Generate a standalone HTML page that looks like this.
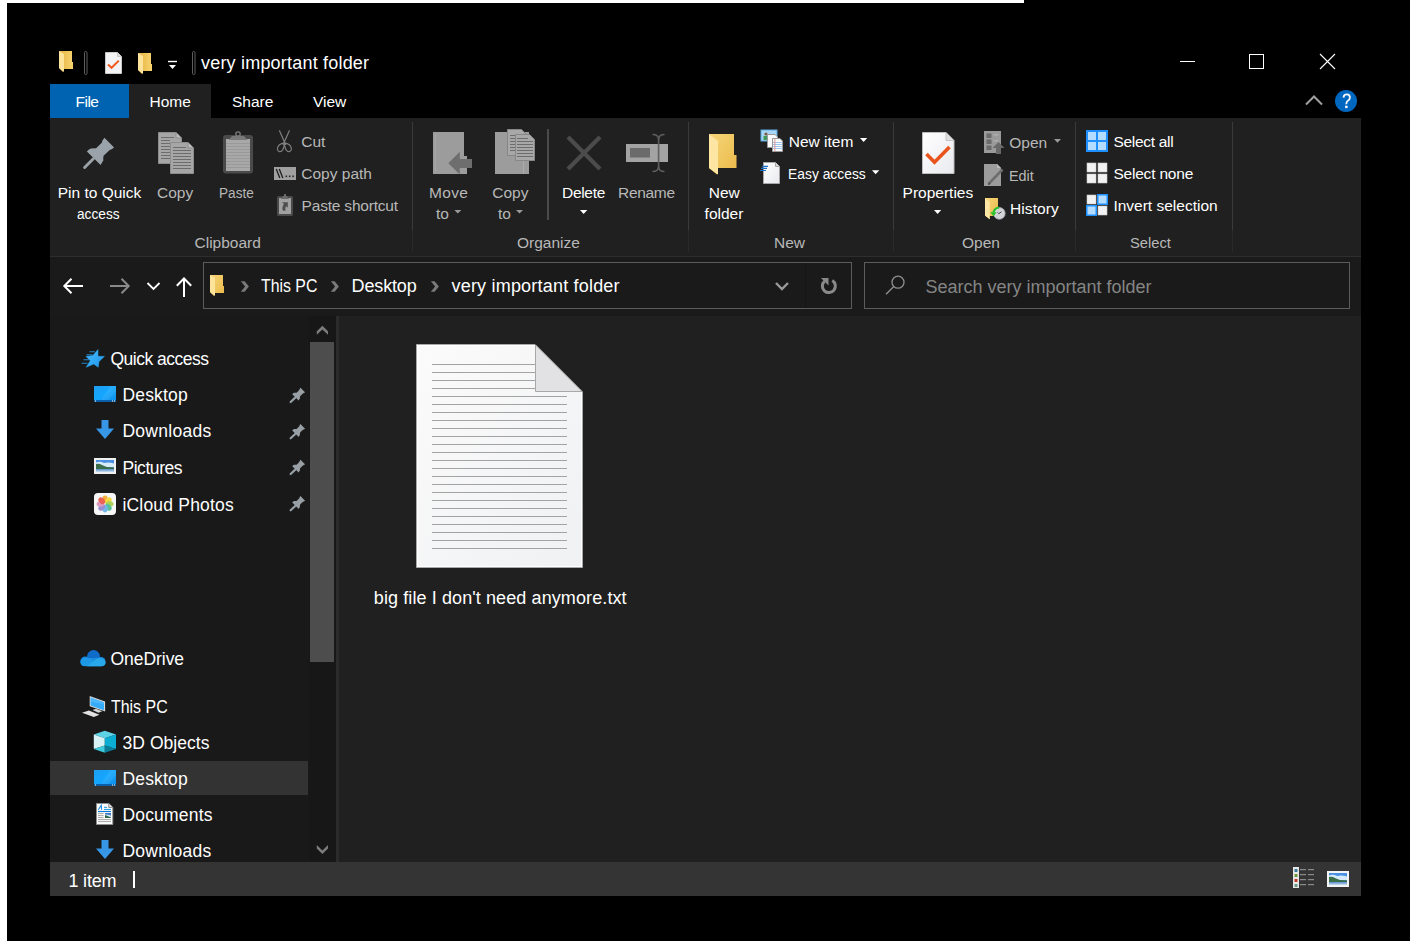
<!DOCTYPE html>
<html><head><meta charset="utf-8">
<style>
html,body{margin:0;padding:0;}
body{width:1410px;height:941px;background:#000;position:relative;overflow:hidden;font-family:"Liberation Sans",sans-serif;color:#fff;}
.a{position:absolute;}
.t{position:absolute;line-height:0;white-space:nowrap;}
.r{font-size:15.5px;}
.g{color:#b8b8b8;}
.n{font-size:17.5px;}
svg{position:absolute;overflow:visible;}
</style></head><body>
<!-- white borders -->
<div class="a" style="left:0;top:0;width:1024px;height:3px;background:#fff"></div>
<div class="a" style="left:0;top:0;width:7px;height:941px;background:#fff"></div>

<!-- title bar -->
<div class="t" style="left:201px;top:62.5px;font-size:18px;letter-spacing:0.2px">very important folder</div>

<!-- tabs -->
<div class="a" style="left:50px;top:84px;width:79px;height:34px;background:#0063b1"></div>
<div class="a" style="left:129px;top:84px;width:82px;height:34px;background:#202020"></div>
<div class="t r" style="left:75.5px;top:102px;letter-spacing:-0.5px">File</div>
<div class="t r" style="left:149.5px;top:102px">Home</div>
<div class="t r" style="left:232px;top:102px">Share</div>
<div class="t r" style="left:313px;top:102px">View</div>

<!-- ribbon body -->
<div class="a" style="left:50px;top:118px;width:1311px;height:138px;background:#202020"></div>
<div class="a" style="left:50px;top:256px;width:1311px;height:1px;background:#2e2e2e"></div>

<!-- address area -->
<div class="a" style="left:50px;top:257px;width:1311px;height:59px;background:#1a1a1a"></div>
<!-- nav pane -->
<div class="a" style="left:50px;top:316px;width:259px;height:546px;background:#191919"></div>
<div class="a" style="left:309px;top:316px;width:27px;height:546px;background:#171717"></div>
<div class="a" style="left:336px;top:316px;width:3px;height:546px;background:#2b2b2b"></div>
<div class="a" style="left:50px;top:761px;width:258px;height:34px;background:#333"></div>
<div class="a" style="left:310px;top:342px;width:24px;height:320px;background:#4d4d4d"></div>
<!-- content -->
<div class="a" style="left:339px;top:316px;width:1022px;height:546px;background:#202020"></div>
<!-- status -->
<div class="a" style="left:50px;top:862px;width:1311px;height:34px;background:#343434"></div>

<!-- ICONS: title bar -->
<svg style="left:0;top:0" width="1410" height="120">
 <defs>
  <linearGradient id="fold" x1="0" y1="0" x2="1" y2="0"><stop offset="0" stop-color="#e6b23f"/><stop offset="1" stop-color="#f7d470"/></linearGradient>
 </defs>
 <!-- folder 1 -->
 <g transform="translate(59,51)">
  <path d="M0 0H13V11H14V18H4V21L0 17Z" fill="url(#fold)"/>
  <path d="M0 0L5 3V21L0 17Z" fill="#fde49a"/>
 </g>
 <!-- separator -->
 <rect x="84.5" y="51.5" width="2.5" height="23" rx="1.2" fill="none" stroke="#5e5e5e" stroke-width="1"/>
 <!-- properties doc small -->
 <g transform="translate(105,52)">
  <path d="M0.5 0.5H12.5L16.5 4.5V21.5H0.5Z" fill="#f3f3f5" stroke="#c8c8c8" stroke-width="1"/>
  <path d="M12.5 0.5V4.5H16.5" fill="#dcdcdc" stroke="#c8c8c8" stroke-width="1"/>
  <path d="M3 12.5L6.6 15.8L13.8 8.6" fill="none" stroke="#f05a1e" stroke-width="2"/>
 </g>
 <!-- folder 2 -->
 <g transform="translate(138,53)">
  <path d="M0 0H13V11H14V18H4V21L0 17Z" fill="url(#fold)"/>
  <path d="M0 0L5 3V21L0 17Z" fill="#fde49a"/>
 </g>
 <!-- dropdown -->
 <rect x="168" y="60.8" width="9" height="1.4" fill="#fff"/>
 <path d="M169 65H176L172.5 69Z" fill="#fff"/>
 <rect x="192.5" y="51.5" width="2.5" height="23" rx="1.2" fill="none" stroke="#5e5e5e" stroke-width="1"/>
 <!-- window controls -->
 <rect x="1180" y="61" width="15" height="1" fill="#fff"/>
 <rect x="1249.5" y="54.5" width="14" height="14" fill="none" stroke="#fff" stroke-width="1"/>
 <path d="M1320 54L1335 69M1335 54L1320 69" stroke="#fff" stroke-width="1.1"/>
 <!-- ribbon minimize chevron -->
 <path d="M1306 104.5L1314 96.5L1322 104.5" fill="none" stroke="#a0a0a0" stroke-width="2"/>
 <!-- help -->
 <circle cx="1346" cy="101" r="11" fill="#0067c0"/>
</svg>
<svg style="left:0;top:0" width="1410" height="120"><path d="M1343.5 97.6Q1343.7 94.4 1346.8 94.4Q1349.9 94.4 1349.9 97.4Q1349.9 99.4 1347.8 100.7Q1346.3 101.7 1346.3 104.2" fill="none" stroke="#f4f8fc" stroke-width="1.8"/><rect x="1345.1" y="105.7" width="2.5" height="2.4" fill="#f4f8fc"/></svg>
<!-- ICONS: ribbon -->
<svg style="left:0;top:0" width="1410" height="260">
 <defs>
  <linearGradient id="yfold" x1="0" y1="0" x2="1" y2="1"><stop offset="0" stop-color="#f7d679"/><stop offset="1" stop-color="#e9b949"/></linearGradient>
  <linearGradient id="wpage" x1="0" y1="0" x2="1" y2="1"><stop offset="0" stop-color="#ffffff"/><stop offset="1" stop-color="#e9eaee"/></linearGradient>
 </defs>
 <!-- group separators -->
 <g fill="#3a3a3a">
  <rect x="412" y="122" width="1" height="108"/>
  <rect x="688" y="122" width="1" height="108"/>
  <rect x="893" y="122" width="1" height="108"/>
  <rect x="1075" y="122" width="1" height="108"/>
  <rect x="1232" y="122" width="1" height="108"/>
 </g>
 <g fill="#2a2a2a">
  <rect x="412" y="230" width="1" height="22"/>
  <rect x="688" y="230" width="1" height="22"/>
  <rect x="893" y="230" width="1" height="22"/>
  <rect x="1075" y="230" width="1" height="22"/>
  <rect x="1232" y="230" width="1" height="22"/>
 </g>
 <rect x="547" y="129" width="2" height="91" fill="#4a4a4a"/>
 <!-- pin -->
 <g transform="translate(80,134)" fill="#9aa3a9">
  <path d="M24.4 3.8L34.1 13.5Q31.5 15.8 29.7 16.1L23.6 21.8Q23 24 23.4 26.2L20.6 31.1L6.9 17.4Q9 15.2 10.9 14.5L16.1 14.3L22 8.5Q21.8 7 24.4 3.8Z"/>
  <path d="M13.3 24.8L4.6 33.5" stroke="#9aa3a9" stroke-width="2.9" stroke-linecap="round"/>
 </g>
 <!-- copy -->
 <g stroke="#8c8c8c" stroke-width="1">
  <path d="M158.5 132.5H176L181.5 138V163.5H158.5Z" fill="#a6a6a6"/>
  <path d="M176 132.5V138H181.5" fill="#bdbdbd"/>
  <path d="M170.5 142.5H188L193.5 148V173.5H170.5Z" fill="#a6a6a6"/>
  <path d="M188 142.5V148H193.5" fill="#bdbdbd"/>
 </g>
 <g fill="#6c6c6c">
  <rect x="161" y="137" width="13" height="1"/>
  <rect x="161" y="140" width="9" height="1"/><rect x="161" y="143" width="9" height="1"/><rect x="161" y="146" width="9" height="1"/><rect x="161" y="149" width="9" height="1"/><rect x="161" y="152" width="9" height="1"/><rect x="161" y="155" width="9" height="1"/><rect x="161" y="158" width="9" height="1"/>
  <rect x="173" y="147" width="13" height="1"/>
  <rect x="173" y="150" width="18" height="1"/><rect x="173" y="153" width="18" height="1"/><rect x="173" y="156" width="18" height="1"/><rect x="173" y="159" width="18" height="1"/><rect x="173" y="162" width="18" height="1"/><rect x="173" y="165" width="18" height="1"/><rect x="173" y="168" width="18" height="1"/>
 </g>
 <!-- paste -->
 <rect x="223" y="135" width="30" height="38.5" rx="3" fill="#4a4a4a"/>
 <rect x="226" y="139" width="24" height="32" fill="#a8a8a8"/>
 <g fill="#999"><rect x="226" y="143" width="24" height="1"/><rect x="226" y="146" width="24" height="1"/><rect x="226" y="149" width="24" height="1"/><rect x="226" y="152" width="24" height="1"/><rect x="226" y="155" width="24" height="1"/><rect x="226" y="158" width="24" height="1"/><rect x="226" y="161" width="24" height="1"/><rect x="226" y="164" width="24" height="1"/><rect x="226" y="167" width="24" height="1"/></g>
 <path d="M228.5 140L232 136H244L247.5 140Z" fill="#7a7a7a"/>
 <circle cx="238" cy="134" r="2.2" fill="none" stroke="#7a7a7a" stroke-width="1.3"/>
 <!-- scissors -->
 <g fill="none" stroke="#7e7e7e" stroke-width="1.25" stroke-linecap="round">
  <path d="M279.5 130.8L285.6 144.5M289.3 130.8L283.2 144.5"/>
  <path d="M284 143.2C281 143.4 277.2 145.5 277.4 149C277.6 152 281 152.6 282.6 150C283.8 148 284.2 145.6 285.2 143.2"/>
  <path d="M284.8 143.2C287.8 143.4 291.6 145.5 291.4 149C291.2 152 287.8 152.6 286.2 150C285 148 284.6 145.6 283.6 143.2"/>
 </g>
 <!-- copy path -->
 <rect x="274" y="167" width="22" height="13" fill="#a0a0a0"/>
 <path d="M276.3 169L279.8 178M279.3 169L282.8 178" stroke="#1e1e1e" stroke-width="1.3"/>
 <g fill="#2a2a2a"><rect x="285.5" y="175.5" width="1.6" height="1.6"/><rect x="288.9" y="175.5" width="1.6" height="1.6"/><rect x="292.3" y="175.5" width="1.6" height="1.6"/></g>
 <!-- paste shortcut -->
 <rect x="277" y="196" width="16" height="20" rx="1.5" fill="#4a4a4a"/>
 <rect x="279" y="198" width="12" height="16" fill="#a0a0a0"/>
 <path d="M281 199L283 196H287L289 199Z" fill="#6a6a6a"/>
 <rect x="284" y="194" width="2" height="2" fill="#6a6a6a"/>
 <path d="M282.1 202.3H287.8V207.7L286.3 206.2Q284.6 207.8 285.6 210.3L283.4 211Q281 208.6 283.9 204.1Z" fill="#4e4e4e"/>
 <!-- move to -->
 <path d="M433 132H464V156H467V174H433Z" fill="#9c9c9c"/>
 <rect x="435" y="134" width="1" height="38" fill="#b0b0b0" opacity="0.5"/>
 <path d="M448.3 163.3L459.8 151.8V159H472V168H459.8V174.6Z" fill="#6e6e6e"/>
 <!-- copy to -->
 <path d="M495 132H529V174H495Z" fill="#9c9c9c"/>
 <rect x="523" y="160" width="1" height="14" fill="#b8b8b8" opacity="0.6"/>
 <g stroke="#868686" stroke-width="1">
  <path d="M507.5 129.5H521.5L527.5 135.5V155.5H507.5Z" fill="#a8a8a8"/>
  <path d="M515.5 134.5H529.5L534.5 139.5V160.5H515.5Z" fill="#a8a8a8"/>
 </g>
 <g fill="#6c6c6c">
  <rect x="510" y="135" width="5" height="1"/><rect x="510" y="138" width="5" height="1"/><rect x="510" y="141" width="5" height="1"/><rect x="510" y="144" width="5" height="1"/><rect x="510" y="147" width="5" height="1"/><rect x="510" y="150" width="5" height="1"/>
  <rect x="517" y="138" width="11" height="1"/><rect x="517" y="141" width="16" height="1"/><rect x="517" y="144" width="16" height="1"/><rect x="517" y="147" width="16" height="1"/><rect x="517" y="150" width="16" height="1"/><rect x="517" y="153" width="16" height="1"/><rect x="517" y="156" width="16" height="1"/>
 </g>
 <!-- delete X -->
 <path d="M568 137L600 169M600 137L568 169" stroke="#4b4b4b" stroke-width="4.2"/>
 <!-- rename -->
 <rect x="626" y="144" width="42" height="18" fill="#a3a3a3"/>
 <rect x="630" y="148" width="20" height="9.5" fill="#6b6b6b"/>
 <rect x="652" y="144" width="2" height="18" fill="#202020" opacity="0"/>
 <g fill="none" stroke="#5e5e5e" stroke-width="1.6">
  <path d="M658.6 138V168"/>
  <path d="M652.5 134.5Q658.6 134.5 658.6 139.5Q658.6 134.5 664.5 134.5"/>
  <path d="M652.5 171.5Q658.6 171.5 658.6 166.5Q658.6 171.5 664.5 171.5"/>
 </g>
 <!-- new folder -->
 <path d="M709 134H734V155H736.5V168H717V174.5L709 168Z" fill="url(#yfold)"/>
 <path d="M709 134L718 141V174.5L709 168Z" fill="#fde6a3"/>
 <!-- new item -->
 <rect x="761" y="130" width="16" height="11" fill="#a8d6f4" stroke="#5aa9e0" stroke-width="1"/>
 <circle cx="766" cy="134" r="1.6" fill="#7a5a40"/>
 <rect x="763.5" y="136" width="5" height="4" fill="#3f9a5a"/>
 <path d="M767.5 134.5H775L777.5 137V147.5H767.5Z" fill="#fafafa" stroke="#9a9a9a" stroke-width="1"/>
 <path d="M772.5 138.5H780L782.5 141V151.5H772.5Z" fill="#fafafa" stroke="#9a9a9a" stroke-width="1"/>
 <g fill="#9cc6ec"><rect x="773" y="142" width="9" height="1"/><rect x="773" y="144" width="9" height="1"/><rect x="773" y="146" width="9" height="1"/><rect x="773" y="148" width="9" height="1"/></g>
 <rect x="774.5" y="139" width="0.8" height="12" fill="#e88080"/>
 <!-- easy access -->
 <path d="M763.5 162.5H775.5L779.5 166.5V183.5H763.5Z" fill="url(#wpage)" stroke="#a8a8a8" stroke-width="1"/>
 <path d="M775.5 162.5V166.5H779.5" fill="#dcdcdc" stroke="#a8a8a8" stroke-width="1"/>
 <g stroke="#1a6fc9" stroke-width="1.2"><path d="M762 166.3H768M761 168.4H767M760 170.5H766"/></g>
 <!-- properties big -->
 <path d="M922.5 132.5H946L954 140.5V173.5H922.5Z" fill="url(#wpage)" stroke="#bdbdbd" stroke-width="1"/>
 <path d="M946 132.5V140.5H954" fill="#dedede" stroke="#c4c4c4" stroke-width="1"/>
 <path d="M926.5 154L934.5 162.2L949.5 147" fill="none" stroke="#e9541c" stroke-width="3.6"/>
 <!-- open -->
 <rect x="984" y="131" width="17" height="22" fill="#9a9a9a"/>
 <g fill="#6a6a6a"><rect x="986.5" y="133.5" width="5" height="4.5"/><rect x="986.5" y="139.5" width="5" height="4.5"/><rect x="986.5" y="145.5" width="5" height="4.5"/></g>
 <g fill="#bdbdbd"><rect x="993.5" y="134.5" width="5" height="0.8"/><rect x="993.5" y="140.5" width="5" height="0.8"/></g>
 <path d="M998.5 142L1004.5 148H1001V154H996V148H992.5Z" fill="#6a6a6a"/>
 <!-- edit -->
 <path d="M984 164H997L1001 168V186H984Z" fill="#9c9c9c"/>
 <path d="M997 164V168H1001Z" fill="#bababa"/>
 <path d="M988.5 184L1002.5 169.5" stroke="#6e6e6e" stroke-width="2.6"/>
 <path d="M987.8 185L988.8 182.5L990.5 184Z" fill="#444"/>
 <!-- history -->
 <path d="M985 198H998V216H989.7V219.2L985 215.5Z" fill="url(#yfold)"/>
 <path d="M985 198L989.7 201.5V219.2L985 215.5Z" fill="#fde6a3"/>
 <circle cx="999.3" cy="213.4" r="5.8" fill="#d2d4d8" stroke="#a9adb2" stroke-width="0.9"/>
 <path d="M997.5 212.4L998.8 213.6L1001.5 211.8" fill="none" stroke="#333" stroke-width="0.9"/>
 <path d="M999.3 207.5Q994.5 207.8 993.4 212.5" fill="none" stroke="#27c22a" stroke-width="2.2"/>
 <path d="M990.2 212.2L996.6 212.2L993.6 216.3Z" fill="#27c22a"/>
 <!-- select all -->
 <rect x="1086" y="130" width="22" height="22" fill="#1e8fff"/>
 <g fill="#b3dcff"><rect x="1088" y="132" width="8" height="8"/><rect x="1098" y="132" width="8" height="8"/><rect x="1088" y="142" width="8" height="8"/><rect x="1098" y="142" width="8" height="8"/></g>
 <!-- select none -->
 <g fill="#f2f2f2" stroke="#c8c8c8" stroke-width="0.6"><rect x="1087" y="163" width="9" height="9"/><rect x="1098" y="163" width="9" height="9"/><rect x="1087" y="174" width="9" height="9"/><rect x="1098" y="174" width="9" height="9"/></g>
 <!-- invert -->
 <g fill="#f2f2f2" stroke="#c8c8c8" stroke-width="0.6"><rect x="1087" y="195" width="9" height="9"/><rect x="1098" y="206" width="9" height="9"/></g>
 <rect x="1097" y="194" width="11" height="11" fill="#1e8fff"/><rect x="1098.5" y="195.5" width="8" height="8" fill="#b3dcff"/>
 <rect x="1086" y="205" width="11" height="11" fill="#1e8fff"/><rect x="1087.5" y="206.5" width="8" height="8" fill="#b3dcff"/>
 <!-- dropdown triangles -->
 <g fill="#9a9a9a">
  <path d="M454.3 210H461.3L457.8 213.5Z"/>
  <path d="M516 210H523L519.5 213.5Z"/>
  <path d="M1054 139H1061L1057.5 142.8Z"/>
 </g>
 <g fill="#fff">
  <path d="M580 210H587.3L583.6 214Z"/>
  <path d="M860 138H867.2L863.6 142Z"/>
  <path d="M872 170.3H879.3L875.6 174.3Z"/>
  <path d="M934 210H941.2L937.6 214Z"/>
 </g>
</svg>
<!-- ICONS: address + nav + content + status -->
<svg style="left:0;top:0" width="1410" height="941">
 <defs>
  <linearGradient id="yfold2" x1="0" y1="0" x2="1" y2="1"><stop offset="0" stop-color="#f7d679"/><stop offset="1" stop-color="#e9b949"/></linearGradient>
  <linearGradient id="desk" x1="0" y1="0" x2="1" y2="1"><stop offset="0" stop-color="#1e9ef0"/><stop offset="0.5" stop-color="#14a6ff"/><stop offset="1" stop-color="#0d8de6"/></linearGradient>
  <linearGradient id="star" x1="0" y1="0" x2="1" y2="1"><stop offset="0" stop-color="#4bbcff"/><stop offset="1" stop-color="#1a94ea"/></linearGradient>
  <linearGradient id="sky" x1="0" y1="0" x2="0" y2="1"><stop offset="0" stop-color="#3a8ee8"/><stop offset="0.45" stop-color="#d8ecf8"/><stop offset="0.55" stop-color="#3f7a4c"/><stop offset="0.7" stop-color="#3f7a4c"/><stop offset="0.75" stop-color="#5a8fc8"/><stop offset="1" stop-color="#a8c8e8"/></linearGradient>
  <linearGradient id="paper" x1="0" y1="0" x2="1" y2="1"><stop offset="0" stop-color="#fbfbfb"/><stop offset="1" stop-color="#f0f1f3"/></linearGradient>
  <linearGradient id="cloud" x1="0" y1="0" x2="0" y2="1"><stop offset="0" stop-color="#0a66c2"/><stop offset="1" stop-color="#28a8ea"/></linearGradient>
 </defs>
 <!-- nav arrows -->
 <g fill="none" stroke-width="2">
  <path d="M83 286H65M71.5 278.8L64.3 286L71.5 293.2" stroke="#fff"/>
  <path d="M110 286H128M121.5 278.8L128.7 286L121.5 293.2" stroke="#8a8a8a"/>
  <path d="M147.5 283L153.5 289L159.5 283" stroke="#fff" stroke-width="1.8"/>
  <path d="M184 297V279M176.8 285.7L184 278.5L191.2 285.7" stroke="#fff"/>
 </g>
 <!-- address box -->
 <rect x="203.5" y="262.5" width="648" height="46" fill="#1a1a1a" stroke="#5c5c5c" stroke-width="1"/>
 <rect x="805" y="263" width="1" height="45" fill="#151515"/>
 <rect x="864.5" y="262.5" width="485" height="46" fill="#1a1a1a" stroke="#5c5c5c" stroke-width="1"/>
 <!-- address folder -->
 <g transform="translate(210,275)">
  <path d="M0 0H13V11H14V18H4V21L0 17Z" fill="url(#yfold2)"/>
  <path d="M0 0L5 3V21L0 17Z" fill="#fde49a"/>
 </g>
 <!-- breadcrumb chevrons -->
 <g fill="#7a7a7a">
  <path d="M240.8 281.2H244.6L248.9 286.5L244.6 291.8H240.8L245.1 286.5Z"/>
  <path d="M330.8 281.2H334.6L338.9 286.5L334.6 291.8H330.8L335.1 286.5Z"/>
  <path d="M430.8 281.2H434.6L438.9 286.5L434.6 291.8H430.8L435.1 286.5Z"/>
 </g>
 <path d="M776 283L782 289L788 283" fill="none" stroke="#9a9a9a" stroke-width="2.4"/>
 <!-- refresh -->
 <path d="M832.3 280.6A6.5 6.5 0 1 1 824.6 281.2" fill="none" stroke="#8a8a8a" stroke-width="3"/>
 <path d="M821 278H828.5V285.5Z" fill="#8a8a8a"/>
 <!-- search icon -->
 <circle cx="898" cy="282.2" r="6" fill="none" stroke="#8e8e8e" stroke-width="1.3"/>
 <path d="M893.8 286.5L886 294.3" stroke="#8e8e8e" stroke-width="1.4"/>
 <!-- scrollbar arrows -->
 <path d="M316.8 331.3L322.4 325.8L328 331.3V334.8L322.4 329.4L316.8 334.8Z" fill="#7c7c7c"/>
 <path d="M316.8 848.5L322.4 854L328 848.5V845L322.4 850.4L316.8 845Z" fill="#7c7c7c"/>
 <!-- star -->
 <g stroke="#2aa0f0" stroke-width="1.1" opacity="0.8">
  <path d="M89.5 351.8H95M86.5 354.8H92.5M83.5 359.8H89.5M81.5 363.3H87.5"/>
 </g>
 <path d="M98.0 349.6L98.0 356.3L104.4 356.4L99.0 361.5L98.2 367.2L93.8 364.1L86.2 367.2L90.3 360.5L85.9 356.4L92.8 355.5Z" fill="url(#star)" stroke="#2ba8f8" stroke-width="0.5" stroke-linejoin="round"/>
 <!-- desktop icons -->
 <g>
  <rect x="94" y="386" width="22" height="16" fill="url(#desk)"/>
  <path d="M100 402L110 386H116V392L106 402Z" fill="#fff" opacity="0.08"/>
  <rect x="94" y="400" width="22" height="2" fill="#0a5fa8"/>
  <rect x="95" y="400.5" width="1" height="1" fill="#fff"/><rect x="112" y="400.5" width="1" height="1" fill="#fff"/><rect x="114" y="400.5" width="1" height="1" fill="#fff"/>
 </g>
 <g>
  <rect x="94" y="770" width="22" height="16" fill="url(#desk)"/>
  <path d="M100 786L110 770H116V776L106 786Z" fill="#fff" opacity="0.08"/>
  <rect x="94" y="784" width="22" height="2" fill="#0a5fa8"/>
  <rect x="95" y="784.5" width="1" height="1" fill="#fff"/><rect x="112" y="784.5" width="1" height="1" fill="#fff"/><rect x="114" y="784.5" width="1" height="1" fill="#fff"/>
 </g>
 <!-- downloads -->
 <path d="M101.5 420H108.5V428.5H114L105 439L96 428.5H101.5Z" fill="#3796e6"/>
 <path d="M101.5 840H108.5V848.5H114L105 859L96 848.5H101.5Z" fill="#3796e6"/>
 <!-- pictures -->
 <rect x="94" y="458" width="22" height="16" fill="#f0f0f0"/>
 <rect x="96" y="460" width="18" height="12" fill="#4a90e2"/>
 <path d="M96 462.5Q100 461 104 463Q109 462 114 463.5V467H96Z" fill="#d6ebf7"/>
 <path d="M96 464Q99 463 102 465Q106 467.5 114 467.5V469H96Z" fill="#3a6e4a"/>
 <path d="M96 469H114V472H96Z" fill="#6a9ad0"/>
 <path d="M96 470.5H114V472H96Z" fill="#b9d3ea"/>
 <!-- icloud photos -->
 <rect x="94" y="493" width="22" height="22" rx="4" fill="#f7f7f7"/>
 <g opacity="0.85" transform="translate(105,504)">
  <ellipse cx="0" cy="-4.6" rx="2.8" ry="3.8" fill="#f7a21b"/>
  <ellipse cx="0" cy="-4.6" rx="2.8" ry="3.8" fill="#f6d51f" transform="rotate(45)"/>
  <ellipse cx="0" cy="-4.6" rx="2.8" ry="3.8" fill="#9ccc3c" transform="rotate(90)"/>
  <ellipse cx="0" cy="-4.6" rx="2.8" ry="3.8" fill="#3cb88a" transform="rotate(135)"/>
  <ellipse cx="0" cy="-4.6" rx="2.8" ry="3.8" fill="#5aaee6" transform="rotate(180)"/>
  <ellipse cx="0" cy="-4.6" rx="2.8" ry="3.8" fill="#8a7ccc" transform="rotate(225)"/>
  <ellipse cx="0" cy="-4.6" rx="2.8" ry="3.8" fill="#d78ab8" transform="rotate(270)"/>
  <ellipse cx="0" cy="-4.6" rx="2.8" ry="3.8" fill="#ea4a3a" transform="rotate(315)"/>
 </g>
 <!-- pins -->
 <g fill="#98a0a6">
  <g transform="translate(289,386) scale(0.47)"><path d="M24.4 3.8L34.1 13.5Q31.5 15.8 29.7 16.1L23.6 21.8Q23 24 23.4 26.2L20.6 31.1L6.9 17.4Q9 15.2 10.9 14.5L16.1 14.3L22 8.5Q21.8 7 24.4 3.8Z"/><path d="M13.3 24.8L3.5 34" stroke="#98a0a6" stroke-width="4.6" stroke-linecap="round"/></g>
  <g transform="translate(289,422.3) scale(0.47)"><path d="M24.4 3.8L34.1 13.5Q31.5 15.8 29.7 16.1L23.6 21.8Q23 24 23.4 26.2L20.6 31.1L6.9 17.4Q9 15.2 10.9 14.5L16.1 14.3L22 8.5Q21.8 7 24.4 3.8Z"/><path d="M13.3 24.8L3.5 34" stroke="#98a0a6" stroke-width="4.6" stroke-linecap="round"/></g>
  <g transform="translate(289,458) scale(0.47)"><path d="M24.4 3.8L34.1 13.5Q31.5 15.8 29.7 16.1L23.6 21.8Q23 24 23.4 26.2L20.6 31.1L6.9 17.4Q9 15.2 10.9 14.5L16.1 14.3L22 8.5Q21.8 7 24.4 3.8Z"/><path d="M13.3 24.8L3.5 34" stroke="#98a0a6" stroke-width="4.6" stroke-linecap="round"/></g>
  <g transform="translate(289,494.3) scale(0.47)"><path d="M24.4 3.8L34.1 13.5Q31.5 15.8 29.7 16.1L23.6 21.8Q23 24 23.4 26.2L20.6 31.1L6.9 17.4Q9 15.2 10.9 14.5L16.1 14.3L22 8.5Q21.8 7 24.4 3.8Z"/><path d="M13.3 24.8L3.5 34" stroke="#98a0a6" stroke-width="4.6" stroke-linecap="round"/></g>
 </g>
 <!-- onedrive -->
 <g>
  <circle cx="93.5" cy="656.5" r="6.5" fill="#0f6cc9"/>
  <circle cx="85" cy="661.3" r="4.7" fill="#1279d6"/>
  <circle cx="101" cy="661.5" r="4.5" fill="#1a8be0"/>
  <rect x="84" y="658" width="18" height="8" fill="#1a8be0"/>
  <path d="M80.5 662Q81 657 86 657.2Q90 657.5 95 662L105.5 662Q105.5 666.3 101 666.3H85Q80.5 666.3 80.5 662Z" fill="#1c98e4"/>
  <path d="M87 666.3L97 658.5Q101 657 104 659.5Q105.6 661 105.5 662.5Q105.3 666.3 101 666.3Z" fill="#28a8ea"/>
 </g>
 <!-- this pc -->
 <path d="M89.7 696.1L105.1 701.4V711.5L89.7 706.2Z" fill="#d8d8d8"/>
 <path d="M90.6 697.6L104 702.2V710.2L90.6 705.5Z" fill="#35abfb"/>
 <path d="M90.6 697.6L104 702.2V704L90.6 702Z" fill="#5cc0ff" opacity="0.6"/>
 <path d="M92.5 709.9L96 708.8L102.2 711.2L98.5 712.7Z" fill="#d6d6d6"/>
 <path d="M82 712.7L88.9 710.4L99.4 714.7L93.8 716.9Z" fill="#e2e2e2"/>
 <!-- 3d objects -->
 <path d="M93.8 734.4L104.8 730.8L116 734.4L104.8 738.3Z" fill="#5fd3e6"/>
 <path d="M93.8 734.4L104.8 738.3V745.4L93.8 749Z" fill="#d9f2f6"/>
 <path d="M104.8 738.3L116 734.4V749L104.8 745.4Z" fill="#0cadd2"/>
 <path d="M93.8 749L104.8 745.4V752.8Z" fill="#3dcbdd"/>
 <path d="M104.8 745.4L116 749L104.8 752.8Z" fill="#0b7d98"/>
 <!-- documents -->
 <path d="M96.5 803.5H108.8L112.8 807.5V824.5H96.5Z" fill="#fdfdfd" stroke="#8e8e8e" stroke-width="1"/>
 <path d="M108.8 803.5V807.5H112.8" fill="#e4e4e4" stroke="#8e8e8e" stroke-width="1"/>
 <path d="M98.3 809.8L101.3 805.2L101.6 809.8" fill="none" stroke="#1f8ae0" stroke-width="1.1"/>
 <g fill="#2aa0e8"><rect x="104" y="806.8" width="3" height="1.1"/><rect x="104" y="808.9" width="7" height="1.1"/></g>
 <rect x="98" y="810.9" width="13" height="1.2" fill="#0a7ad8"/>
 <g fill="#a6a6a6"><rect x="98" y="813.1" width="5.6" height="1"/><rect x="98" y="815.1" width="5.6" height="1"/><rect x="98" y="817.1" width="5.6" height="1"/><rect x="98" y="819.1" width="13" height="1"/><rect x="98" y="821.1" width="13" height="1"/></g>
 <rect x="105" y="813" width="6" height="5" fill="#3b78c8"/>
 <path d="M105 814.5Q108 814 111 815.5V818H105Z" fill="#cfe3f3"/>
 <path d="M105 815Q107 815.8 111 817.5V818H105Z" fill="#2f6a4a"/>
 <!-- big txt document -->
 <path d="M416.5 344.5H535L582.5 392V567.5H416.5Z" fill="url(#paper)" stroke="#a8a8a8" stroke-width="1"/>
 <path d="M417.5 345.5H534.5L581.5 392.5V566.5H417.5Z" fill="none" stroke="#ffffff" stroke-width="1"/>
 <path d="M535.5 345L582 391.5H535.5Z" fill="#e2e2e4" stroke="#a8a8a8" stroke-width="1"/>
 <g fill="#a3a3a5"><rect x="432" y="364" width="103" height="1"/><rect x="432" y="372" width="103" height="1"/><rect x="432" y="380" width="103" height="1"/><rect x="432" y="388" width="103" height="1"/><rect x="432" y="396" width="135" height="1"/><rect x="432" y="404" width="135" height="1"/><rect x="432" y="412" width="135" height="1"/><rect x="432" y="420" width="135" height="1"/><rect x="432" y="428" width="135" height="1"/><rect x="432" y="436" width="135" height="1"/><rect x="432" y="444" width="135" height="1"/><rect x="432" y="452" width="135" height="1"/><rect x="432" y="460" width="135" height="1"/><rect x="432" y="468" width="135" height="1"/><rect x="432" y="476" width="135" height="1"/><rect x="432" y="484" width="135" height="1"/><rect x="432" y="492" width="135" height="1"/><rect x="432" y="500" width="135" height="1"/><rect x="432" y="508" width="135" height="1"/><rect x="432" y="516" width="135" height="1"/><rect x="432" y="524" width="135" height="1"/><rect x="432" y="532" width="135" height="1"/><rect x="432" y="540" width="135" height="1"/><rect x="432" y="548" width="135" height="1"/></g>
 <!-- status bar -->
 <rect x="133" y="871" width="2" height="17" fill="#fff"/>
 <rect x="1293" y="867" width="6" height="21" fill="#e8e8e8"/>
 <g fill="#3a7a9a"><rect x="1294.5" y="869" width="3" height="3"/></g>
 <rect x="1294.5" y="874" width="3" height="3" fill="#6a9a3a"/>
 <rect x="1294.5" y="879" width="3" height="3" fill="#c03a2a"/>
 <rect x="1294.5" y="884" width="3" height="3" fill="#6a9a8a"/>
 <g fill="#8a8a8a"><rect x="1300" y="869" width="6" height="1.2"/><rect x="1308" y="869" width="6" height="1.2"/><rect x="1300" y="874" width="6" height="1.2"/><rect x="1308" y="874" width="6" height="1.2"/><rect x="1300" y="879" width="6" height="1.2"/><rect x="1308" y="879" width="6" height="1.2"/><rect x="1300" y="884" width="6" height="1.2"/><rect x="1308" y="884" width="6" height="1.2"/></g>
 <rect x="1327" y="871" width="22" height="16" fill="#f4f4f4"/>
 <rect x="1329" y="873" width="18" height="12" fill="#4a90e2"/>
 <path d="M1329 875.5Q1333 874 1337 876Q1342 875 1347 876.5V880H1329Z" fill="#d6ebf7"/>
 <path d="M1329 877Q1332 876 1335 878Q1339 880.5 1347 880.5V882H1329Z" fill="#3a6e4a"/>
 <path d="M1329 882H1347V885H1329Z" fill="#6a9ad0"/>
 <path d="M1329 883.5H1347V885H1329Z" fill="#b9d3ea"/>
</svg>
<!-- texts -->
<div class="t " style="left:57.7px;top:193.3px;font-size:15.5px;">Pin to Quick</div>
<div class="t " style="left:77.4px;top:214.0px;font-size:15.5px;transform:scaleX(0.884);transform-origin:0 0">access</div>
<div class="t g" style="left:157px;top:193.3px;font-size:15.5px;">Copy</div>
<div class="t g" style="left:218.9px;top:193.3px;font-size:15.5px;transform:scaleX(0.878);transform-origin:0 0">Paste</div>
<div class="t g" style="left:301.3px;top:142.3px;font-size:15.5px;">Cut</div>
<div class="t g" style="left:301.3px;top:174.4px;font-size:15.5px;">Copy path</div>
<div class="t g" style="left:301.6px;top:205.7px;font-size:15.5px;letter-spacing:-0.2px">Paste shortcut</div>
<div class="t g" style="left:194.5px;top:243.0px;font-size:15.5px;">Clipboard</div>
<div class="t g" style="left:429px;top:193.3px;font-size:15.5px;letter-spacing:0.3px">Move</div>
<div class="t g" style="left:436px;top:214.0px;font-size:15.5px;">to</div>
<div class="t g" style="left:492.3px;top:193.3px;font-size:15.5px;">Copy</div>
<div class="t g" style="left:498px;top:214.0px;font-size:15.5px;">to</div>
<div class="t " style="left:562px;top:193.3px;font-size:15.5px;letter-spacing:-0.3px">Delete</div>
<div class="t g" style="left:618px;top:193.3px;font-size:15.5px;letter-spacing:-0.3px">Rename</div>
<div class="t g" style="left:517px;top:243.0px;font-size:15.5px;">Organize</div>
<div class="t " style="left:708.7px;top:193.3px;font-size:15.5px;">New</div>
<div class="t " style="left:704.6px;top:214.0px;font-size:15.5px;">folder</div>
<div class="t " style="left:788.8px;top:142.1px;font-size:15.5px;">New item</div>
<div class="t " style="left:787.8px;top:173.7px;font-size:15.5px;transform:scaleX(0.894);transform-origin:0 0">Easy access</div>
<div class="t g" style="left:774px;top:243.0px;font-size:15.5px;">New</div>
<div class="t " style="left:902.6px;top:193.3px;font-size:15.5px;">Properties</div>
<div class="t g" style="left:1009.3px;top:143.2px;font-size:15.5px;">Open</div>
<div class="t g" style="left:1009.2px;top:176.0px;font-size:15.5px;transform:scaleX(0.926);transform-origin:0 0">Edit</div>
<div class="t " style="left:1010px;top:208.7px;font-size:15.5px;letter-spacing:0.1px">History</div>
<div class="t g" style="left:962px;top:243.0px;font-size:15.5px;">Open</div>
<div class="t " style="left:1113.4px;top:142.3px;font-size:15.5px;letter-spacing:-0.3px">Select all</div>
<div class="t " style="left:1113.4px;top:173.7px;font-size:15.5px;letter-spacing:-0.2px">Select none</div>
<div class="t " style="left:1113.4px;top:205.8px;font-size:15.5px;">Invert selection</div>
<div class="t g" style="left:1130.4px;top:243.0px;font-size:15.5px;transform:scaleX(0.95);transform-origin:0 0">Select</div>
<div class="t " style="left:261.2px;top:285.8px;font-size:18px;transform:scaleX(0.88);transform-origin:0 0">This PC</div>
<div class="t " style="left:351.6px;top:286px;font-size:18px;letter-spacing:-0.15px">Desktop</div>
<div class="t " style="left:451.5px;top:286px;font-size:18px;letter-spacing:0.2px">very important folder</div>
<div class="t " style="left:925.5px;top:286.6px;font-size:18px;color:#858585">Search very important folder</div>
<div class="t " style="left:110.5px;top:359.0px;font-size:17.5px;letter-spacing:-0.5px">Quick access</div>
<div class="t " style="left:122.4px;top:395.3px;font-size:17.5px;letter-spacing:0.2px">Desktop</div>
<div class="t " style="left:122.4px;top:431.4px;font-size:17.5px;letter-spacing:0.3px">Downloads</div>
<div class="t " style="left:122.4px;top:467.5px;font-size:17.5px;letter-spacing:-0.43px">Pictures</div>
<div class="t " style="left:122.4px;top:505.0px;font-size:17.5px;letter-spacing:0.2px">iCloud Photos</div>
<div class="t " style="left:110.5px;top:659.4px;font-size:17.5px;letter-spacing:-0.05px">OneDrive</div>
<div class="t " style="left:110.5px;top:707.4px;font-size:17.5px;transform:scaleX(0.91);transform-origin:0 0">This PC</div>
<div class="t " style="left:122.5px;top:742.5px;font-size:17.5px;letter-spacing:0.05px">3D Objects</div>
<div class="t " style="left:122.4px;top:779.1px;font-size:17.5px;letter-spacing:0.2px">Desktop</div>
<div class="t " style="left:122.4px;top:815px;font-size:17.5px;letter-spacing:0.2px">Documents</div>
<div class="t " style="left:122.4px;top:851px;font-size:17.5px;letter-spacing:0.3px">Downloads</div>
<div class="t " style="left:68.5px;top:881.4px;font-size:18px;letter-spacing:-0.2px">1 item</div>
<div class="t " style="left:373.8px;top:598.4px;font-size:18px;letter-spacing:0.1px">big file I don't need anymore.txt</div>
</body></html>
